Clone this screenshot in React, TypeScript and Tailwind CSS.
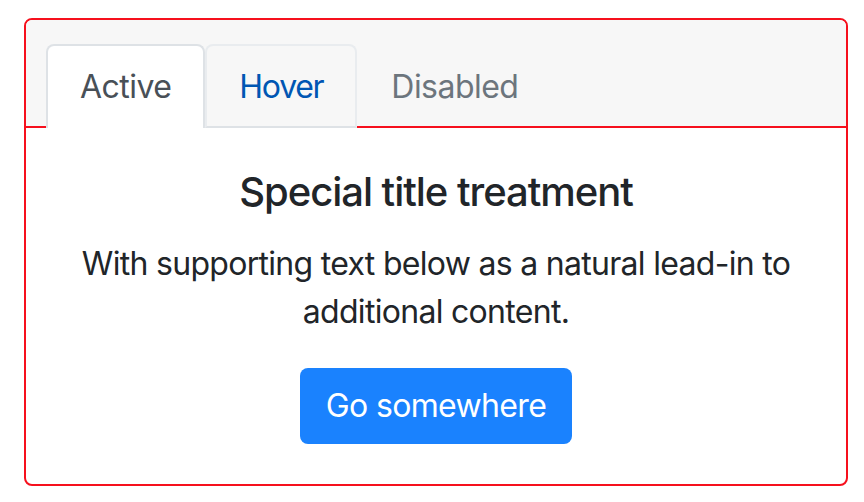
import React from "react";

export default function App() {
  const font = { fontFamily: 'Inter, "Noto Sans", "Liberation Sans", sans-serif' };
  return (
    <div className="w-[864px] h-[502px] bg-white overflow-hidden" style={font}>
      <div className="ml-[24px] mt-[18px] w-[824px] border-2 border-[#f6101d] rounded-[8px] overflow-hidden">
        {/* header */}
        <div className="bg-[#f7f7f7] border-b-2 border-[#f6101d] px-[20px] pt-[24px]">
          <div className="flex h-[82px] items-start tracking-[-0.034em]">
            <div className="relative z-10 h-[84px] px-[32px] pt-[17px] pb-[15px] border-2 border-b-0 border-[#dee2e6] rounded-t-[8px] bg-white text-[32px] leading-[48px] text-[#495057]">
              Active
            </div>
            <div className="relative z-10 h-[84px] px-[32px] pt-[17px] pb-[15px] border-2 border-[#e9ecef] border-b-[#dee2e6] rounded-t-[8px] text-[32px] leading-[48px] text-[#0056b3] tracking-[-0.04em]">
              Hover
            </div>
            <div className="h-[84px] px-[32px] pt-[17px] pb-[15px] border-2 border-transparent text-[32px] leading-[48px] text-[#6c757d]">
              Disabled
            </div>
          </div>
        </div>
        {/* body */}
        <div className="p-[40px] text-center text-[#212529]">
          <h5 className="text-[40px] leading-[48px] font-medium mb-[24px] tracking-[-0.026em]">Special title treatment</h5>
          <p className="text-[32px] leading-[48px] mb-[32px] tracking-[-0.022em]">
            With supporting text below as a natural lead-in to<br />additional content.
          </p>
          <button className="inline-block bg-[#1a82fe] text-white text-[32px] leading-[48px] px-[24px] py-[12px] border-2 border-transparent rounded-[8px] tracking-[-0.02em]">
            Go somewhere
          </button>
        </div>
      </div>
    </div>
  );
}
